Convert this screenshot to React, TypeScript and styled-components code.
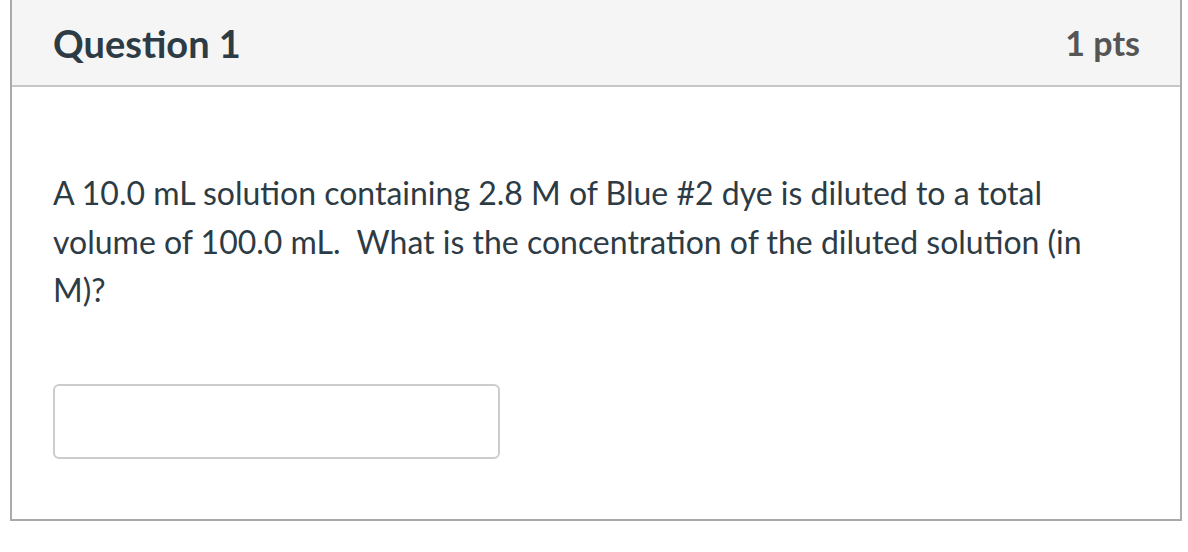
import styled, {createGlobalStyle} from "styled-components";

const GlobalStyle = createGlobalStyle`
    body {
        margin: 0;
        background: #fff;
        font-family: Lato, "Noto Sans", sans-serif;
    }
`;

function App() {
    return (
        <>
            <GlobalStyle/>
            <QuestionCard>
                <Header>
                    <Title>Question 1</Title>
                    <Points>1 pts</Points>
                </Header>
                <Body>
                    <QuestionText>
                        A 10.0 mL solution containing 2.8 M of Blue #2 dye is diluted to a total
                        volume of 100.0 mL.&nbsp; What is the concentration of the diluted solution (in
                        M)?
                    </QuestionText>
                    <AnswerInput type="text" aria-label="Answer"/>
                </Body>
            </QuestionCard>
        </>
    )
}

const QuestionCard = styled.div`
    margin-left: 10px;
    width: 1168px;
    border: 2px solid #aaaaaa;
    border-top: 0;
    background: #fff;
`;

const Header = styled.div`
    display: flex;
    justify-content: space-between;
    align-items: center;
    height: 85px;
    padding: 0 40px 0 41px;
    background: #f5f5f5;
    border-bottom: 2px solid #c7c7c7;
`;

const Title = styled.h2`
    margin: 0;
    font-size: 38px;
    font-weight: 700;
    color: #2d3b45;
`;

const Points = styled.div`
    font-size: 34px;
    font-weight: 700;
    color: #555555;
`;

const Body = styled.div`
    padding: 82px 41px 60px;
`;

const QuestionText = styled.p`
    margin: 0 0 69px;
    max-width: 1050px;
    font-size: 32px;
    line-height: 48.5px;
    color: #2d3b45;
`;

const AnswerInput = styled.input`
    display: block;
    box-sizing: border-box;
    width: 447px;
    height: 75px;
    margin: 0;
    padding: 0 12px;
    border: 2px solid #cccccc;
    border-radius: 6px;
    background: #fff;
    font-family: Lato, sans-serif;
    font-size: 26px;
    outline: none;
`;

export default App;
